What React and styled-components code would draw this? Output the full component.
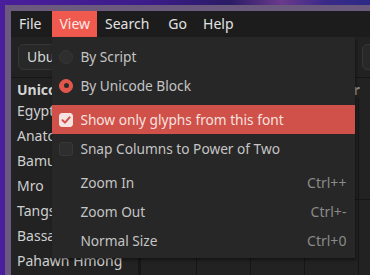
import React from "react";
import styled, { createGlobalStyle } from "styled-components";

const Global = createGlobalStyle`
  html, body { margin: 0; padding: 0; width: 370px; height: 275px; overflow: hidden; }
  body {
    font-family: "Noto Sans", "DejaVu Sans", sans-serif;
    background: linear-gradient(90deg, #4a1e9c 0%, #3c1c8a 40%, #2a1c66 62%, #6a3a8c 76%, #3a2a88 88%, #2c2a86 100%);
  }
`;

const Desktop = styled.div`
  padding: 5px 0 0 5px;
  width: 370px;
  height: 275px;
  box-sizing: border-box;
  overflow: hidden;
`;

const Frame = styled.div`
  border-top: 6px solid #6b5a7e;
  border-left: 6px solid #6b5a7e;
  width: 420px;
  height: 300px;
  background: #222222;
  box-sizing: border-box;
  display: flex;
  flex-direction: column;
`;

const MenuBar = styled.div`
  flex: none;
  display: flex;
  height: 26px;
  background: #1c1c1c;
  padding-left: 1px;
  position: relative;
  z-index: 2;
`;

const MenuTitle = styled.div`
  position: relative;
  height: 26px;
  line-height: 26px;
  padding: 0 7px;
  font-size: 14px;
  color: ${(p) => (p.$active ? "#fde8e6" : "#e2e2e2")};
  background: ${(p) => (p.$active ? "#f0594e" : "transparent")};
  margin-right: ${(p) => p.$gap || 0}px;
`;

const Dropdown = styled.div`
  position: absolute;
  top: 26px;
  left: 0;
  width: 303px;
  background: #272727;
  padding: 5px 0 3px;
  box-shadow: 1px 2px 3px rgba(0, 0, 0, 0.45);
  display: flex;
  flex-direction: column;
`;

const Item = styled.div`
  height: 29px;
  display: flex;
  align-items: center;
  padding: 0 9px 0 7px;
  font-size: 13.7px;
  color: ${(p) => (p.$hl ? "#f6e2df" : "#c4c4c4")};
  background: ${(p) => (p.$hl ? "#d0504a" : "transparent")};
`;

const Gap = styled.div`
  height: ${(p) => p.$h}px;
`;

const Indicator = styled.span`
  width: 14px;
  height: 14px;
  margin-right: 7px;
  flex: none;
  box-sizing: border-box;
  display: flex;
  align-items: center;
  justify-content: center;
`;

const Radio = styled(Indicator)`
  border-radius: 50%;
  background: ${(p) => (p.$on ? "#e2574c" : "#2e2e2e")};
  border: 1px solid ${(p) => (p.$on ? "#e2574c" : "#363636")};
  &::after {
    content: "";
    display: ${(p) => (p.$on ? "block" : "none")};
    width: 5px;
    height: 5px;
    border-radius: 50%;
    background: #2a2a2a;
  }
`;

const Check = styled(Indicator)`
  border-radius: 3px;
  background: ${(p) => (p.$on ? "#f6e4e2" : "#2e2e2e")};
  border: 1px solid ${(p) => (p.$on ? "#f6e4e2" : "#383838")};
`;

const Label = styled.span`
  flex: 1;
  white-space: nowrap;
  padding-left: ${(p) => (p.$pad ? 21 : 0)}px;
`;

const Shortcut = styled.span`
  color: #8a8a8a;
  font-size: 14px;
`;

const Toolbar = styled.div`
  flex: none;
  height: 41px;
  display: flex;
  align-items: center;
  padding: 0 33px 0 7px;
  border-bottom: 1px solid #161616;
  box-sizing: border-box;
  background: #222222;
`;

const Combo = styled.div`
  width: 170px;
  height: 26px;
  border: 1px solid #363636;
  border-radius: 5px;
  background: #282828;
  color: #d6d6d6;
  font-size: 14px;
  line-height: 24px;
  padding-left: 8px;
  box-sizing: border-box;
  margin-right: auto;
`;

const ToolButton = styled.div`
  width: 30px;
  height: 26px;
  border: 1px solid #363636;
  border-radius: 5px;
  background: #282828;
  box-sizing: border-box;
`;

const Panes = styled.div`
  display: flex;
  flex: 1;
  min-height: 0;
`;

const Sidebar = styled.div`
  width: 127px;
  flex: none;
  border-right: 3px solid #171717;
  overflow: hidden;
`;

const ListHeader = styled.div`
  height: 20px;
  padding: 4px 0 0 6px;
  box-sizing: border-box;
  line-height: 16px;
  font-size: 14px;
  font-weight: bold;
  color: #d4d4d4;
  white-space: nowrap;
`;

const ListItem = styled.div`
  height: 25px;
  line-height: 25px;
  padding-left: 6px;
  font-size: 14px;
  color: #cfcfcf;
  white-space: nowrap;
`;

const Main = styled.div`
  flex: 1;
  display: flex;
  flex-direction: column;
  overflow: hidden;
`;

const MainHeader = styled.div`
  height: 20px;
  flex: none;
  padding: 4px 0 0 150px;
  box-sizing: border-box;
  line-height: 16px;
  font-size: 14px;
  font-weight: bold;
  color: #8c8c8c;
  white-space: nowrap;
`;

const Grid = styled.div`
  display: grid;
  grid-template-columns: repeat(6, 54px);
  grid-template-rows: 102px 97px;
  padding-left: 2px;
`;

const Cell = styled.div`
  border-right: 1px solid #161616;
  border-bottom: 1px solid #161616;
`;

const blocks = [
  "Egyptian Hieroglyphs",
  "Anatolian Hieroglyphs",
  "Bamum Supplement",
  "Mro",
  "Tangsa",
  "Bassa Vah",
  "Pahawh Hmong",
];

export default function App() {
  return (
    <>
      <Global />
      <Desktop>
        <Frame>
          <MenuBar>
            <MenuTitle $gap={4}>File</MenuTitle>
            <MenuTitle $active $gap={1}>
              View
              <Dropdown>
                <Item>
                  <Radio />
                  <Label>By Script</Label>
                </Item>
                <Item>
                  <Radio $on />
                  <Label>By Unicode Block</Label>
                </Item>
                <Gap $h={5} />
                <Item $hl>
                  <Check $on>
                    <svg width="10" height="10" viewBox="0 0 10 10">
                      <path d="M1.5 5.2 L4 7.6 L8.6 2.4" fill="none" stroke="#d0504a" strokeWidth="2" strokeLinecap="round" strokeLinejoin="round" />
                    </svg>
                  </Check>
                  <Label>Show only glyphs from this font</Label>
                </Item>
                <Item>
                  <Check />
                  <Label>Snap Columns to Power of Two</Label>
                </Item>
                <Gap $h={5} />
                <Item>
                  <Label $pad>Zoom In</Label>
                  <Shortcut>Ctrl++</Shortcut>
                </Item>
                <Item>
                  <Label $pad>Zoom Out</Label>
                  <Shortcut>Ctrl+-</Shortcut>
                </Item>
                <Item>
                  <Label $pad>Normal Size</Label>
                  <Shortcut>Ctrl+0</Shortcut>
                </Item>
              </Dropdown>
            </MenuTitle>
            <MenuTitle $gap={5}>Search</MenuTitle>
            <MenuTitle $gap={2}>Go</MenuTitle>
            <MenuTitle>Help</MenuTitle>
          </MenuBar>
          <Toolbar>
            <Combo>Ubuntu</Combo>
            <ToolButton />
          </Toolbar>
          <Panes>
            <Sidebar>
              <ListHeader>Unicode Block</ListHeader>
              {blocks.map((l) => (
                <ListItem key={l}>{l}</ListItem>
              ))}
            </Sidebar>
            <Main>
              <MainHeader>Character</MainHeader>
              <Grid>
                {Array.from({ length: 12 }).map((_, i) => (
                  <Cell key={i} />
                ))}
              </Grid>
            </Main>
          </Panes>
        </Frame>
      </Desktop>
    </>
  );
}
